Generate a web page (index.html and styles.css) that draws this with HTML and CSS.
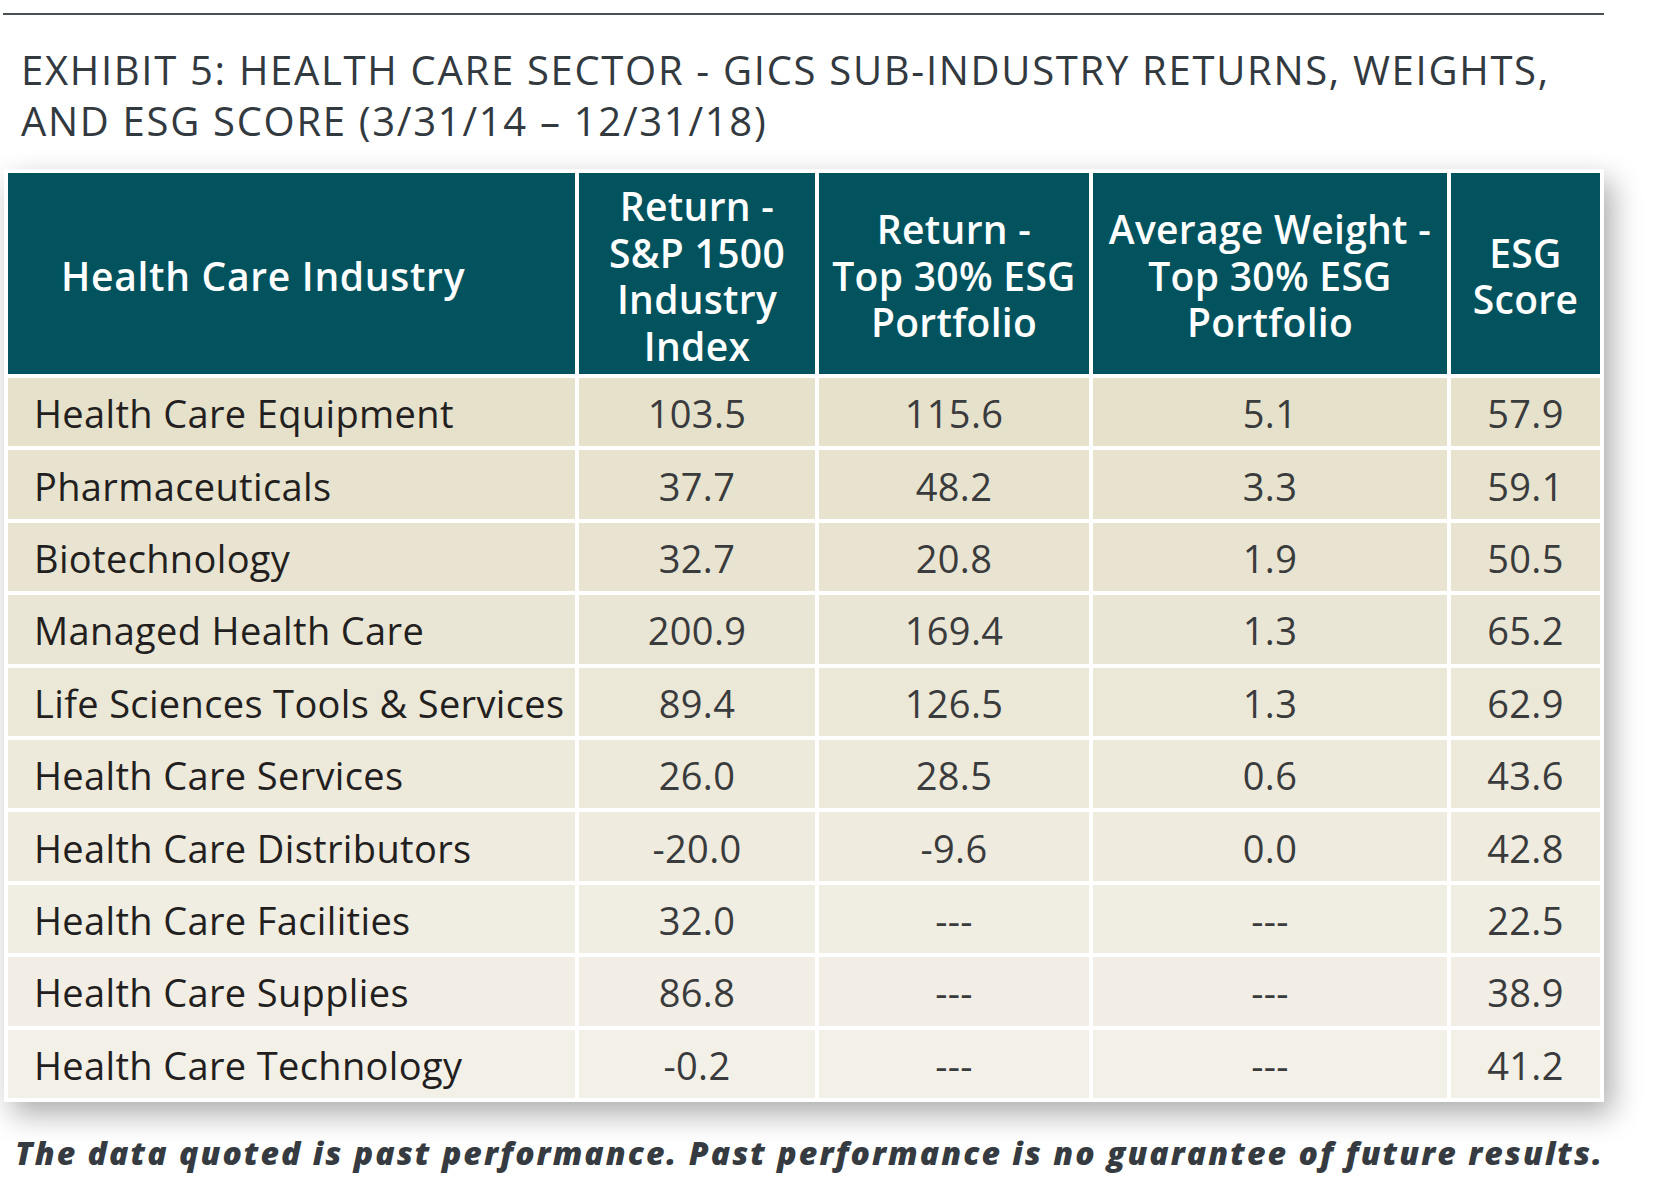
FILE: index.html
```html
<!DOCTYPE html>
<html lang="en">
<head>
<meta charset="utf-8">
<title>Exhibit 5: Health Care Sector</title>
<link rel="stylesheet" href="styles.css">
</head>
<body>
<div class="page">
  <hr class="rule">
  <h1 class="title">EXHIBIT 5: HEALTH CARE SECTOR - GICS SUB-INDUSTRY RETURNS, WEIGHTS,<br>AND ESG SCORE (3/31/14 – 12/31/18)</h1>
  <table class="data">
    <colgroup>
      <col class="c1"><col class="c2"><col class="c3"><col class="c4"><col class="c5">
    </colgroup>
    <thead>
      <tr>
        <th class="name">Health Care Industry</th>
        <th>Return -<br>S&amp;P 1500<br>Industry<br>Index</th>
        <th>Return -<br>Top 30% ESG<br>Portfolio</th>
        <th>Average Weight -<br>Top 30% ESG<br>Portfolio</th>
        <th>ESG<br>Score</th>
      </tr>
    </thead>
    <tbody>
      <tr><td class="name">Health Care Equipment</td><td>103.5</td><td>115.6</td><td>5.1</td><td>57.9</td></tr>
      <tr><td class="name">Pharmaceuticals</td><td>37.7</td><td>48.2</td><td>3.3</td><td>59.1</td></tr>
      <tr><td class="name">Biotechnology</td><td>32.7</td><td>20.8</td><td>1.9</td><td>50.5</td></tr>
      <tr><td class="name">Managed Health Care</td><td>200.9</td><td>169.4</td><td>1.3</td><td>65.2</td></tr>
      <tr><td class="name">Life Sciences Tools &amp; Services</td><td>89.4</td><td>126.5</td><td>1.3</td><td>62.9</td></tr>
      <tr><td class="name">Health Care Services</td><td>26.0</td><td>28.5</td><td>0.6</td><td>43.6</td></tr>
      <tr><td class="name">Health Care Distributors</td><td>-20.0</td><td>-9.6</td><td>0.0</td><td>42.8</td></tr>
      <tr><td class="name">Health Care Facilities</td><td>32.0</td><td>---</td><td>---</td><td>22.5</td></tr>
      <tr><td class="name">Health Care Supplies</td><td>86.8</td><td>---</td><td>---</td><td>38.9</td></tr>
      <tr><td class="name">Health Care Technology</td><td>-0.2</td><td>---</td><td>---</td><td>41.2</td></tr>
    </tbody>
  </table>
  <p class="note">The data quoted is past performance. Past performance is no guarantee of future results.</p>
</div>
</body>
</html>
```
FILE: styles.css
```css
html, body {
  margin: 0;
  padding: 0;
  background: #ffffff;
}

.page {
  font-family: "Open Sans", "Noto Sans", sans-serif;
  padding-top: 13px;
  width: 1669px;
}

.rule {
  margin: 0 0 0 3px;
  width: 1601px;
  height: 2px;
  border: 0;
  background: #4b5054;
}

.title {
  margin: 29px 0 0 21px;
  font-size: 40px;
  line-height: 51px;
  font-weight: 400;
  letter-spacing: 1.7px;
  color: #333a3f;
}

.data {
  margin: 23px 0 0 4px;
  width: 1600px;
  table-layout: fixed;
  border-collapse: separate;
  border-spacing: 4px;
  background: #ffffff;
  box-shadow: 8px 12px 28px rgba(0, 0, 0, 0.33);
}

.c1 { width: 567px; }
.c2 { width: 236px; }
.c3 { width: 270px; }
.c4 { width: 354px; }
.c5 { width: 149px; }

.data th {
  height: 201px;
  padding: 5px 2px 0;
  box-sizing: border-box;
  background: #02535e;
  color: #ffffff;
  font-size: 39px;
  line-height: 46.5px;
  font-weight: 600;
  letter-spacing: 0.3px;
  text-align: center;
  vertical-align: middle;
}

.data th.name {
  text-align: left;
  padding-left: 53px;
  letter-spacing: 0.7px;
}

.data td {
  height: 68.4px;
  padding: 2px 4px 0;
  box-sizing: border-box;
  font-size: 38px;
  line-height: 46px;
  font-weight: 400;
  letter-spacing: 0.35px;
  color: #3a3b3c;
  text-align: center;
  vertical-align: middle;
}

.data td.name {
  text-align: left;
  padding-left: 26px;
  color: #231f20;
  white-space: nowrap;
}

.data tbody tr:nth-child(1) td { background: #e6e1cb; }
.data tbody tr:nth-child(2) td { background: #e7e3ce; }
.data tbody tr:nth-child(3) td { background: #e9e4d1; }
.data tbody tr:nth-child(4) td { background: #eae6d5; }
.data tbody tr:nth-child(5) td { background: #ece8d8; }
.data tbody tr:nth-child(6) td { background: #ede9db; }
.data tbody tr:nth-child(7) td { background: #efebde; }
.data tbody tr:nth-child(8) td { background: #f0ede2; }
.data tbody tr:nth-child(9) td { background: #f2eee5; }
.data tbody tr:nth-child(10) td { background: #f3f0e8; }

.note {
  margin: 31px 0 0 15px;
  font-size: 32px;
  line-height: 40px;
  font-weight: 800;
  font-style: italic;
  letter-spacing: 2.05px;
  color: #353b40;
  white-space: nowrap;
}
```
